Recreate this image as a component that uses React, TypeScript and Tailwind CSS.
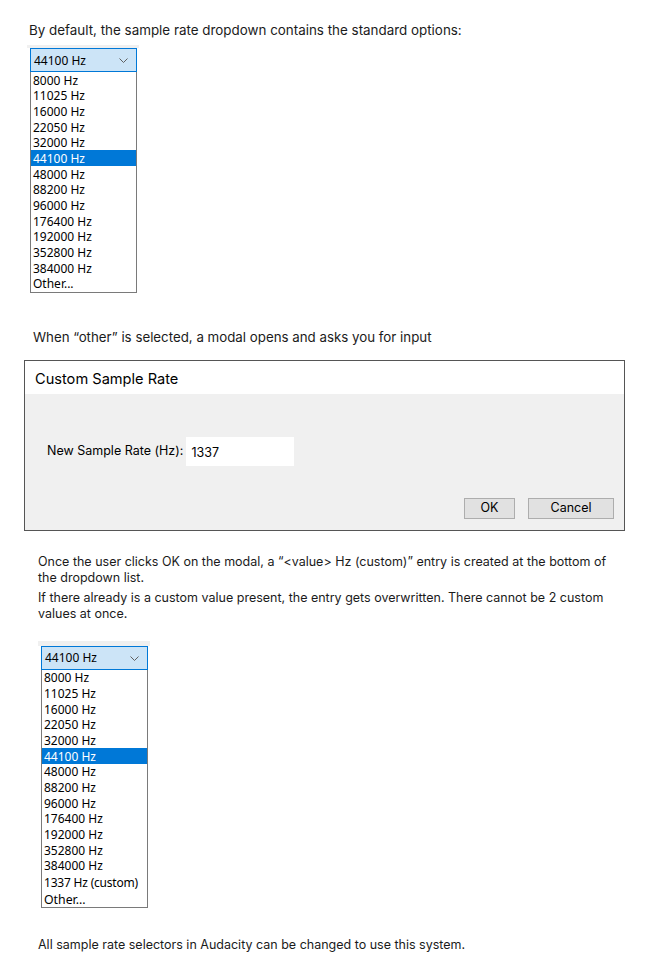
const RATES = [
  '8000 Hz',
  '11025 Hz',
  '16000 Hz',
  '22050 Hz',
  '32000 Hz',
  '44100 Hz',
  '48000 Hz',
  '88200 Hz',
  '96000 Hz',
  '176400 Hz',
  '192000 Hz',
  '352800 Hz',
  '384000 Hz',
];

const Chevron = () => (
  <svg width="9" height="5" viewBox="0 0 9 5" fill="none">
    <path d="M0.5 0.5 L4.5 4.5 L8.5 0.5" stroke="#606060" strokeWidth="1" />
  </svg>
);

const RateDropdown = ({ custom }: { custom?: string }) => {
  return (
    <div className="flex flex-col w-[107px] font-['Noto_Sans',sans-serif] text-[12px] text-black">
      {/* combo box */}
      <div className="h-[24px] flex items-center justify-between border border-[#0078d7] bg-[#cce4f7] pl-[3px] pr-[8px] pt-[1px]">
        <span>44100 Hz</span>
        <Chevron />
      </div>
      {/* open list */}
      <div className="flex flex-col bg-white border border-t-0 border-[#7a7a7a]">
        {RATES.map((r) => (
          <div
            key={r}
            className={
              r === '44100 Hz'
                ? 'h-[15.7px] pt-[1.5px] leading-[14.2px] pl-[2px] bg-[#0078d7] text-white'
                : 'h-[15.7px] pt-[1.5px] leading-[14.2px] pl-[2px]'
            }
          >
            {r}
          </div>
        ))}
        {custom && (
          <div className="h-[17px] pt-[1px] leading-[16px] pl-[2px] text-[12px] tracking-[-0.2px]">{custom}</div>
        )}
        <div
          className={
            custom
              ? 'h-[16px] pt-[1px] leading-[15px] pl-[2px] text-[12.3px]'
              : 'h-[15.7px] pt-[1.5px] leading-[14.2px] pl-[2px]'
          }
        >
          Other...
        </div>
      </div>
    </div>
  );
};

export default function App() {
  return (
    <div className="w-[654px] h-[978px] bg-white flex flex-col font-['Inter',sans-serif] text-[#1b1b1b]">
      <p className="mt-[20px] ml-[29px] text-[13.4px] leading-[20px]">
        By default, the sample rate dropdown contains the standard options:
      </p>

      <div className="mt-[5px] ml-[27px] w-[112px] h-[3px] bg-[#f0f0f0]" />
      <div className="ml-[30px]">
        <RateDropdown />
      </div>

      <p className="mt-[34px] ml-[33px] text-[13.3px] leading-[20px]">
        When “other” is selected, a modal opens and asks you for input
      </p>

      {/* Custom Sample Rate modal */}
      <div className="mt-[13px] ml-[24px] w-[601px] h-[171px] border border-[#555555] flex flex-col">
        <div className="h-[33px] bg-white flex items-center pl-[10px] pt-[5px] text-[14.6px] text-black">
          Custom Sample Rate
        </div>
        <div className="flex-1 bg-[#f0f0f0] flex flex-col">
          <div className="mt-[43px] ml-[22px] flex items-center text-[12.5px] text-black">
            <span className="pt-[1px]">New Sample Rate (Hz):</span>
            <div className="ml-[3px] w-[108px] h-[29px] bg-white flex items-center pl-[5px] pt-[4px]">1337</div>
          </div>
          <div className="mt-auto mb-[11px] mr-[10px] self-end flex gap-[13px] text-[12.5px] text-black">
            <button className="w-[51px] h-[21px] bg-[#e1e1e1] border border-[#adadad] leading-none pt-[1px]">OK</button>
            <button className="w-[86px] h-[21px] bg-[#e1e1e1] border border-[#adadad] leading-none pt-[1px]">
              Cancel
            </button>
          </div>
        </div>
      </div>

      <div className="mt-[23px] ml-[38px] w-[580px] text-[12.5px] leading-[16px] flex flex-col gap-[4px]">
        <p>
          Once the user clicks OK on the modal, a “&lt;value&gt; Hz (custom)” entry is created at the bottom of the
          dropdown list.
        </p>
        <p>
          If there already is a custom value present, the entry gets overwritten. There cannot be 2 custom values at
          once.
        </p>
      </div>

      <div className="mt-[19px] ml-[38px] w-[112px] h-[5px] bg-[#f0f0f0]" />
      <div className="ml-[41px]">
        <RateDropdown custom="1337 Hz (custom)" />
      </div>

      <p className="mt-[29px] ml-[38px] text-[12.5px] leading-[16px]">
        All sample rate selectors in Audacity can be changed to use this system.
      </p>
    </div>
  );
}
